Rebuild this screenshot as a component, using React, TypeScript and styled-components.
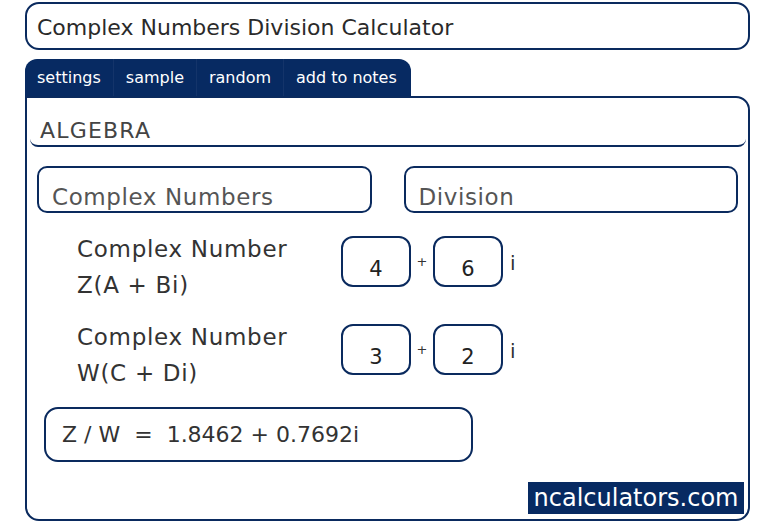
import { FC } from 'react';
import styled, { createGlobalStyle } from 'styled-components';

const navy = '#0a2a5e';

const GlobalStyle = createGlobalStyle`
  body {
    margin: 0;
    background: #fff;
    font-family: 'DejaVu Sans', 'Noto Sans', sans-serif;
  }
`;

type Row = { title: string; expr: string; re: string; im: string };

const rows: Row[] = [
  { title: 'Complex Number', expr: 'Z(A + Bi)', re: '4', im: '6' },
  { title: 'Complex Number', expr: 'W(C + Di)', re: '3', im: '2' },
];

const tabs = ['settings', 'sample', 'random', 'add to notes'];

const App: FC = () => (
  <>
    <GlobalStyle />
    <Page>
      <TitleBox>Complex Numbers Division Calculator</TitleBox>
      <TabBar>
        {tabs.map((t) => (
          <Tab key={t}>{t}</Tab>
        ))}
      </TabBar>
      <Panel>
        <Category>ALGEBRA</Category>
        <TopicRow>
          <TopicBox>Complex Numbers</TopicBox>
          <TopicBox>Division</TopicBox>
        </TopicRow>
        {rows.map((r) => (
          <InputRow key={r.expr}>
            <Label>
              <span>{r.title}</span>
              <span>{r.expr}</span>
            </Label>
            <NumberBox>{r.re}</NumberBox>
            <Plus>+</Plus>
            <NumberBox>{r.im}</NumberBox>
            <Imag>i</Imag>
          </InputRow>
        ))}
        <Result>Z / W&nbsp; = &nbsp;1.8462 + 0.7692i</Result>
        <Footer>
          <Brand>ncalculators.com</Brand>
        </Footer>
      </Panel>
    </Page>
  </>
);

export default App;

const Page = styled.div`
  width: 725px;
  padding: 2px 0 0 25px;
  display: flex;
  flex-direction: column;
`;

const TitleBox = styled.div`
  height: 42px;
  border: 2px solid ${navy};
  border-radius: 14px;
  padding: 2px 10px 0;
  display: flex;
  align-items: center;
  font-size: 22px;
  color: #2a2a2a;
`;

const TabBar = styled.div`
  margin-top: 9px;
  align-self: flex-start;
  display: flex;
  height: 37px;
  background: #072a62;
  border-radius: 12px 12px 0 0;
  overflow: hidden;
`;

const Tab = styled.div`
  display: flex;
  align-items: center;
  padding: 0 12px;
  color: #fff;
  font-size: 16px;
  border-right: 1px solid #14346a;

  &:last-child {
    border-right: none;
    padding-right: 14px;
  }
`;

const Panel = styled.div`
  height: 421px;
  border: 2px solid ${navy};
  border-radius: 0 14px 14px 14px;
  display: flex;
  flex-direction: column;
`;

const Category = styled.div`
  margin: 0 2px 0 3px;
  height: 49px;
  padding: 0 0 2px 10px;
  display: flex;
  align-items: flex-end;
  box-sizing: border-box;
  font-size: 22px;
  letter-spacing: 1.2px;
  color: #444;
  border-bottom: 2px solid ${navy};
  border-radius: 0 0 8px 8px;
`;

const TopicRow = styled.div`
  margin: 19px 10px 0;
  display: flex;
  gap: 32px;
`;

const TopicBox = styled.div`
  flex: 1;
  height: 47px;
  border: 2px solid ${navy};
  border-radius: 10px;
  padding: 0 13px 1px;
  display: flex;
  align-items: flex-end;
  box-sizing: border-box;
  font-size: 23px;
  letter-spacing: 0.6px;
  color: #555;
`;

const InputRow = styled.div`
  margin: 18px 0 0 50px;
  display: flex;
  align-items: flex-start;

  & + & {
    margin-top: 16px;
  }
`;

const Label = styled.div`
  width: 264px;
  display: flex;
  flex-direction: column;
  font-size: 23px;
  letter-spacing: 0.7px;
  line-height: 36px;
  color: #333;
`;

const NumberBox = styled.div`
  margin-top: 5px;
  width: 66px;
  height: 43px;
  border: 2px solid ${navy};
  border-radius: 12px;
  display: flex;
  justify-content: center;
  align-items: flex-end;
  padding-bottom: 4px;
  font-size: 21px;
  color: #222;
`;

const Plus = styled.span`
  margin-top: 23px;
  width: 22px;
  text-align: center;
  font-size: 13px;
  color: #333;
`;

const Imag = styled.span`
  margin: 20px 0 0 7px;
  font-size: 20px;
  color: #333;
`;

const Result = styled.div`
  margin: 16px 0 0 17px;
  width: 429px;
  height: 55px;
  border: 2px solid ${navy};
  border-radius: 14px;
  padding: 0 16px;
  box-sizing: border-box;
  display: flex;
  align-items: center;
  font-size: 22px;
  color: #333;
  white-space: pre;
`;

const Footer = styled.div`
  margin-top: auto;
  padding: 0 4px 5px 0;
  display: flex;
  justify-content: flex-end;
`;

const Brand = styled.div`
  width: 216px;
  height: 32px;
  background: #072a62;
  color: #fff;
  font-size: 24px;
  display: flex;
  align-items: center;
  justify-content: center;
`;
